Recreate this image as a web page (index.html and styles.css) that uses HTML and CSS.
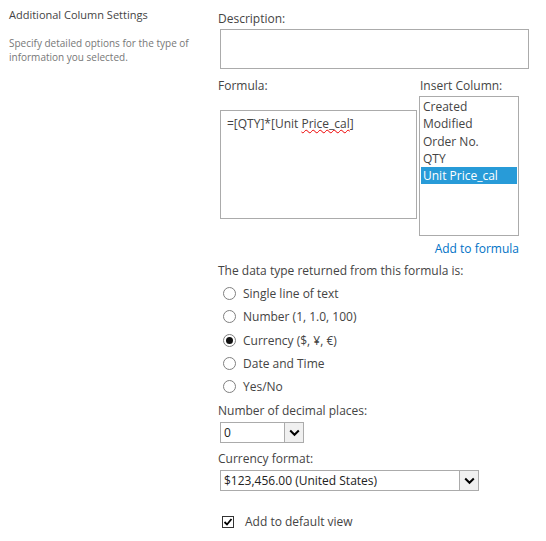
FILE: index.html
```html
<!DOCTYPE html>
<html>
<head>
<meta charset="utf-8">
<link rel="stylesheet" href="styles.css">
</head>
<body>
<div class="page">
  <div class="side">
    <div class="side-title">Additional Column Settings</div>
    <div class="side-desc">Specify detailed options for the type of information you selected.</div>
  </div>
  <div class="main">
    <div class="label">Description:</div>
    <div class="textbox desc"></div>

    <div class="formula-row">
      <div class="formula-col">
        <div class="label">Formula:</div>
        <div class="textbox formula">=[QTY]*[Unit <span class="spell">Price_cal</span>]</div>
      </div>
      <div class="insert-col">
        <div class="label">Insert Column:</div>
        <div class="listbox">
          <div class="opt">Created</div>
          <div class="opt">Modified</div>
          <div class="opt">Order No.</div>
          <div class="opt">QTY</div>
          <div class="opt selected">Unit Price_cal</div>
        </div>
        <div class="add-link">Add to formula</div>
      </div>
    </div>

    <div class="label type-label">The data type returned from this formula is:</div>
    <div class="radios">
      <div class="radio-row"><span class="radio"></span><span>Single line of text</span></div>
      <div class="radio-row"><span class="radio"></span><span>Number (1, 1.0, 100)</span></div>
      <div class="radio-row"><span class="radio checked"></span><span>Currency ($, ¥, €)</span></div>
      <div class="radio-row"><span class="radio"></span><span>Date and Time</span></div>
      <div class="radio-row"><span class="radio"></span><span>Yes/No</span></div>
    </div>

    <div class="label decimal-label">Number of decimal places:</div>
    <div class="select small">
      <span class="select-value">0</span>
      <span class="select-btn"><svg width="11" height="8" viewBox="0 0 11 8"><path d="M1.2 1.5 L5.5 5.8 L9.8 1.5" fill="none" stroke="#000" stroke-width="2"/></svg></span>
    </div>

    <div class="label currency-label">Currency format:</div>
    <div class="select wide">
      <span class="select-value">$123,456.00 (United States)</span>
      <span class="select-btn"><svg width="11" height="8" viewBox="0 0 11 8"><path d="M1.2 1.5 L5.5 5.8 L9.8 1.5" fill="none" stroke="#000" stroke-width="2"/></svg></span>
    </div>

    <div class="check-row">
      <span class="checkbox"><svg width="12" height="12" viewBox="0 0 12 12"><rect x="0.5" y="0.5" width="11" height="11" fill="#fff" stroke="#333"/><path d="M2.5 6 L5 8.5 L9.5 3" fill="none" stroke="#000" stroke-width="1.8"/></svg></span>
      <span>Add to default view</span>
    </div>
  </div>
</div>
</body>
</html>
```

FILE: styles.css
```css
html, body {
  margin: 0;
  padding: 0;
  background: #fff;
}
body {
  font-family: "Open Sans", "Noto Sans", sans-serif;
  font-size: 12px;
  color: #444;
}
.page {
  display: flex;
  align-items: flex-start;
}
.side {
  width: 200px;
  padding: 7px 0 0 9px;
  flex: none;
}
.side-title {
  font-size: 11px;
  line-height: 16px;
  color: #444;
}
.side-desc {
  margin-top: 13px;
  font-size: 10px;
  line-height: 14px;
  color: #777;
}
.main {
  margin-left: 9px;
  padding-top: 10px;
  width: 310px;
}
.label {
  font-size: 12px;
  line-height: 17px;
  color: #444;
}
.textbox {
  box-sizing: border-box;
  border: 1px solid #ababab;
  background: #fff;
}
.desc {
  margin: 2px 0 0 2px;
  width: 309px;
  height: 40px;
}
.formula-row {
  display: flex;
  margin-top: 8px;
}
.formula-col {
  width: 201px;
  flex: none;
}
.formula {
  margin: 16px 0 0 2px;
  width: 197px;
  height: 109px;
  padding: 4px 6px;
  font-size: 12px;
  line-height: 17px;
  color: #444;
}
.spell {
  text-decoration: underline wavy #e00;
  text-decoration-thickness: 1px;
  text-underline-offset: 1px;
}
.insert-col {
  display: flex;
  flex-direction: column;
  align-items: flex-end;
  width: 100px;
}
.insert-col .label {
  align-self: flex-start;
  margin-left: 1px;
}
.listbox {
  margin-top: 2px;
  box-sizing: border-box;
  width: 100px;
  height: 140px;
  border: 1px solid #ababab;
  padding: 1px;
}
.opt {
  font-size: 12px;
  line-height: 17.3px;
  padding-left: 2px;
  color: #444;
  white-space: nowrap;
}
.opt.selected {
  background: #289bd8;
  color: #fff;
}
.add-link {
  margin-top: 4px;
  font-size: 12px;
  line-height: 17px;
  color: #0072c6;
}
.type-label {
  margin-top: 5px;
}
.radios {
  margin-top: 3px;
}
.radio-row {
  display: flex;
  align-items: center;
  height: 23.3px;
  font-size: 12px;
}
.radio {
  box-sizing: border-box;
  width: 13px;
  height: 13px;
  border: 1px solid #808080;
  border-radius: 50%;
  margin: 0 7px 0 5px;
  display: flex;
  align-items: center;
  justify-content: center;
  background: #fff;
}
.radio.checked::after {
  content: "";
  width: 7px;
  height: 7px;
  border-radius: 50%;
  background: #111;
}
.decimal-label {
  margin-top: 4px;
}
.select {
  margin-top: 3px;
  margin-left: 2px;
  box-sizing: border-box;
  height: 21px;
  border: 1px solid #ababab;
  display: flex;
  align-items: stretch;
  background: #fff;
}
.select.small {
  width: 84px;
}
.select.wide {
  width: 259px;
}
.select-value {
  flex: 1;
  font-size: 12px;
  line-height: 19px;
  padding-left: 3px;
  color: #222;
}
.select-btn {
  box-sizing: border-box;
  width: 19px;
  border-left: 1px solid #ababab;
  background: #f0f0f0;
  display: flex;
  align-items: center;
  justify-content: center;
}
.currency-label {
  margin-top: 7px;
}
.check-row {
  display: flex;
  align-items: center;
  margin-top: 22px;
  margin-left: 4px;
  font-size: 12px;
  line-height: 17px;
}
.checkbox {
  display: flex;
  margin-right: 11px;
}
```
